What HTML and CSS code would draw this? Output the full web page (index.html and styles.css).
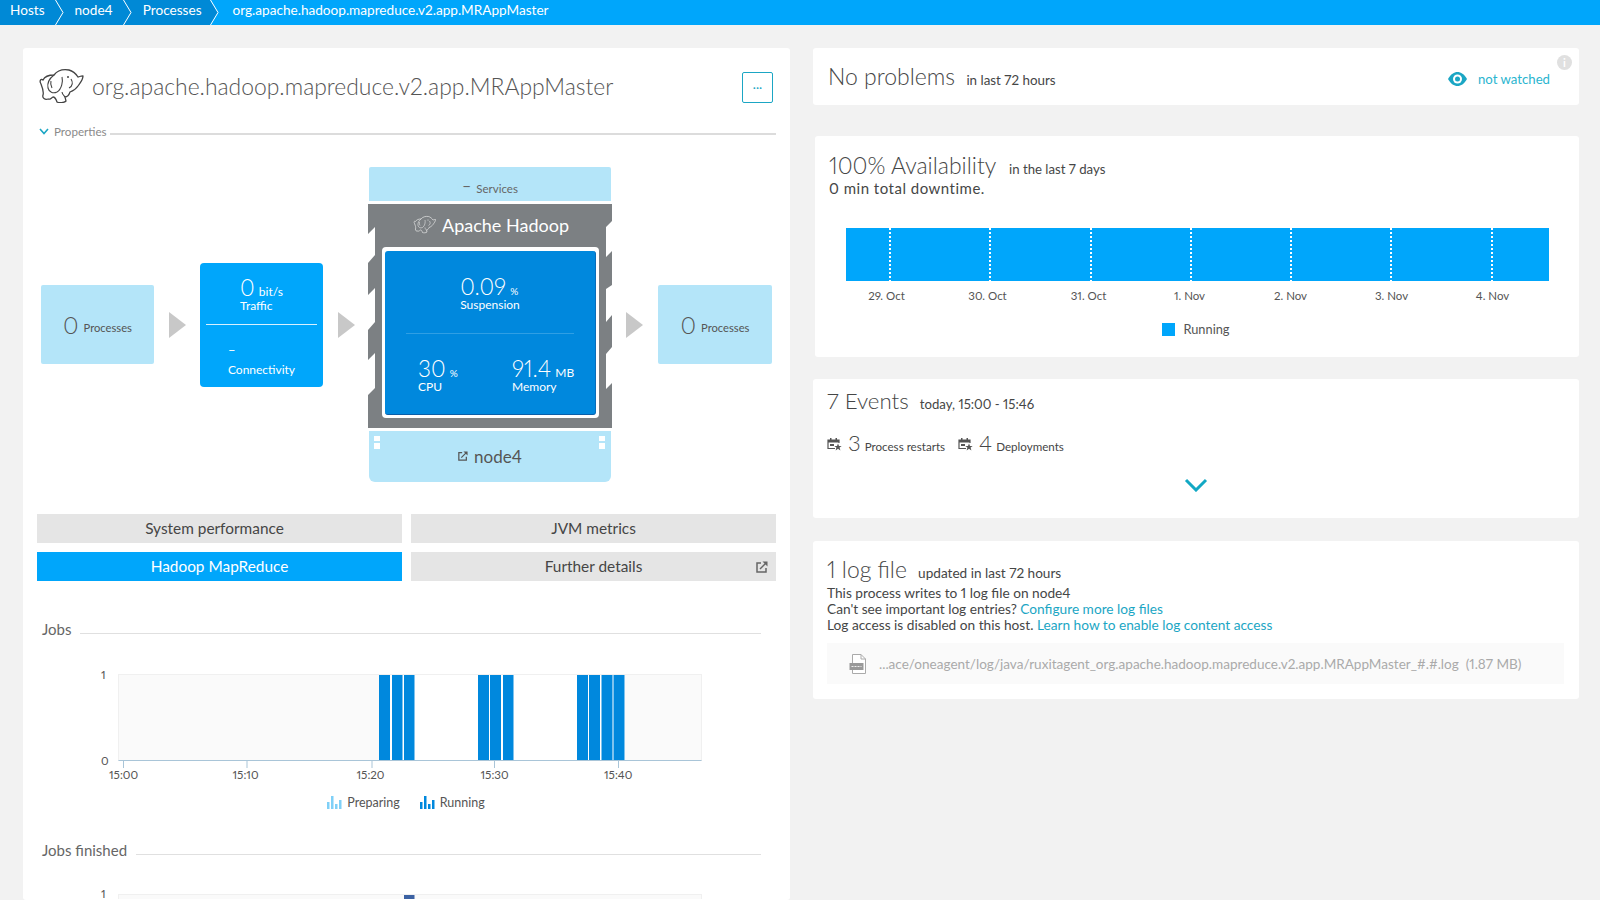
FILE: index.html
```html
<!DOCTYPE html>
<html lang="en">
<head>
    <meta charset="UTF-8">
    <meta name="viewport" content="width=device-width, initial-scale=1.0">
    <title>org.apache.hadoop.mapreduce.v2.app.MRAppMaster</title>
    <link rel="stylesheet" href="styles.css">
</head>
<body>
    <svg class="defs" width="0" height="0">
        <symbol id="elephant" viewBox="0 0 46 34">
            <path fill="none" stroke="currentColor" stroke-width="1.300" d="M3 15C1 12 3 9 5 11C7 7 12 6 16 6C19 2 25 0 31 1C35 2 38 5 40 8C42 8 44 6 45 7C45 11 42 14 40 17C38 20 35 22 32 23C31 26 29 28 27 28L28 32C26 34 21 34 19 33C18 30 17 28 15 28C13 29 12 31 10 30C7 31 4 29 5 26C6 23 5 20 3 15Z"/>
            <path fill="none" stroke="currentColor" stroke-width="1.100" d="M16 6C12 9 9 14 10 19C11 23 15 25 19 23C24 20 25 12 24 8M33 10C35 13 35 17 31 19M27 28C25 26 24 25 24 23M13 12C12 15 13 17 14 19"/>
            <circle cx="30" cy="8" r="1" fill="currentColor"/>
        </symbol>
        <symbol id="external" viewBox="0 0 12 12">
            <path fill="none" stroke="currentColor" stroke-width="1.500" d="M5 2H1V11H10V7"/>
            <path fill="none" stroke="currentColor" stroke-width="1.500" d="M4 8L10 2"/>
            <path fill="currentColor" d="M6.500 0.500H11.500V5.500Z"/>
        </symbol>
        <symbol id="calendar" viewBox="0 0 15 13">
            <path fill="none" stroke="currentColor" stroke-width="1.200" d="M8 10.500H1V2H12V5"/>
            <path fill="currentColor" d="M1 2H12V4.500H1ZM3 0H4.500V2H3ZM8.500 0H10V2H8.500ZM3 6H7V8H3Z"/>
            <path fill="currentColor" d="M11 5.500L12 8H14.700L12.600 9.600L13.400 12.500L11 10.800L8.600 12.500L9.400 9.600L7.300 8H10Z"/>
        </symbol>
        <symbol id="bars" viewBox="0 0 15 13">
            <path fill="currentColor" d="M0 6H2.500V13H0ZM4 0H6.500V13H4ZM8 8H10.500V13H8ZM12 4H14.500V13H12Z"/>
        </symbol>
    </svg>

    <nav class="topbar">
        <div class="crumbs">
            <a class="crumb">Hosts</a>
            <svg class="sep" viewBox="0 0 9 25"><path d="M0.500 0L8 12.500L0.500 25"/></svg>
            <a class="crumb">node4</a>
            <svg class="sep" viewBox="0 0 9 25"><path d="M0.500 0L8 12.500L0.500 25"/></svg>
            <a class="crumb">Processes</a>
        </div>
        <svg class="sep sep-last" viewBox="0 0 9 25"><polygon points="0,0 8,12.500 0,25"/><path d="M0.500 0L8 12.500L0.500 25"/></svg>
        <span class="crumb-current">org.apache.hadoop.mapreduce.v2.app.MRAppMaster</span>
    </nav>

    <main class="page">
        <section class="card process-card">
            <header class="process-head">
                <svg class="process-icon"><use href="#elephant"/></svg>
                <h1>org.apache.hadoop.mapreduce.v2.app.MRAppMaster</h1>
                <button class="more-btn">···</button>
            </header>

            <div class="properties">
                <svg class="props-chevron" viewBox="0 0 10 7"><path d="M1 1L5 5.500L9 1"/></svg>
                <span>Properties</span>
                <i class="rule"></i>
            </div>

            <div class="diagram">
                <div class="box-light side-box"><b>0</b> Processes</div>
                <i class="arrow"></i>
                <div class="traffic-box">
                    <div class="traffic-top">
                        <div class="stat">
                            <div class="stat-value"><b>0</b> bit/s</div>
                            <div class="stat-label">Traffic</div>
                        </div>
                    </div>
                    <div class="traffic-bottom">
                        <div class="stat">
                            <div class="dash">–</div>
                            <div class="stat-label">Connectivity</div>
                        </div>
                    </div>
                </div>
                <i class="arrow arrow-mid"></i>
                <div class="stack">
                    <div class="services"><span class="minus">–</span> Services</div>
                    <div class="core">
                        <div class="core-title">
                            <svg class="core-icon"><use href="#elephant"/></svg>
                            <span>Apache Hadoop</span>
                        </div>
                        <div class="core-frame">
                            <div class="core-blue">
                                <div class="core-top">
                                    <div class="stat">
                                        <div class="stat-value"><b>0.09</b> <small>%</small></div>
                                        <div class="stat-label">Suspension</div>
                                    </div>
                                </div>
                                <div class="core-rule"></div>
                                <div class="core-row">
                                    <div class="stat core-cpu">
                                        <div class="stat-value"><b>30</b> <small>%</small></div>
                                        <div class="stat-label">CPU</div>
                                    </div>
                                    <div class="stat">
                                        <div class="stat-value"><b>91.4</b> MB</div>
                                        <div class="stat-label">Memory</div>
                                    </div>
                                </div>
                            </div>
                        </div>
                    </div>
                    <div class="node">
                        <i class="pin pin-left"></i>
                        <i class="pin pin-right"></i>
                        <svg class="node-icon"><use href="#external"/></svg>
                        <span>node4</span>
                    </div>
                </div>
                <i class="arrow arrow-end"></i>
                <div class="box-light side-box side-box-right"><b>0</b> Processes</div>
            </div>

            <div class="tabs">
                <button class="tab tab-off-center">System performance</button>
                <button class="tab">JVM metrics</button>
                <button class="tab tab-active">Hadoop MapReduce</button>
                <button class="tab">Further details
                    <svg class="tab-icon"><use href="#external"/></svg>
                </button>
            </div>

            <div class="chart-head chart-head-first"><span>Jobs</span><i></i></div>
            <svg class="chart" viewBox="0 0 700 125" width="700" height="125">
                <rect x="77.500" y="9.500" width="583" height="86" class="plot"/>
                <rect x="338" y="10" width="246" height="85" fill="#fff"/>
                <g fill="#0088dd">
                    <rect x="338" y="10" width="11" height="86"/>
                    <rect x="351" y="10" width="10.500" height="86"/>
                    <rect x="363" y="10" width="10.500" height="86"/>
                    <rect x="437" y="10" width="11" height="86"/>
                    <rect x="449" y="10" width="11" height="86"/>
                    <rect x="462" y="10" width="10.500" height="86"/>
                    <rect x="536" y="10" width="11" height="86"/>
                    <rect x="548" y="10" width="11" height="86"/>
                    <rect x="560.500" y="10" width="11" height="86"/>
                    <rect x="572.500" y="10" width="11" height="86"/>
                </g>
                <path class="axis" d="M77.500 95.500H660.500M82.500 96V103M206 96V103M331 96V103M453.500 96V103M577.500 96V103"/>
                <g class="chart-text">
                    <text x="60" y="14">1</text>
                    <text x="60" y="100">0</text>
                    <text x="68" y="114">15:00</text>
                    <text x="191.500" y="114">15:10</text>
                    <text x="315.500" y="114">15:20</text>
                    <text x="439.500" y="114">15:30</text>
                    <text x="563" y="114">15:40</text>
                </g>
            </svg>
            <div class="chart-legend">
                <span class="legend-item"><svg class="legend-bars legend-bars-light"><use href="#bars"/></svg>Preparing</span>
                <span class="legend-item"><svg class="legend-bars"><use href="#bars"/></svg>Running</span>
            </div>

            <div class="chart-head"><span>Jobs finished</span><i></i></div>
            <svg class="chart chart-second" viewBox="0 0 700 13" width="700" height="13">
                <rect x="77.500" y="8.500" width="583" height="40" class="plot"/>
                <rect x="363" y="9" width="10.500" height="20" fill="#3c62a3"/>
                <text class="chart-text" x="60" y="12">1</text>
            </svg>
        </section>

        <div class="side">
            <section class="card problems-card">
                <h2>No problems <small>in last 72 hours</small></h2>
                <a class="watch">
                    <svg class="eye" viewBox="0 0 19 14">
                        <path fill="#1ba6c4" d="M0 7C3 2 6 0 9.500 0S16 2 19 7C16 12 13 14 9.500 14S3 12 0 7Z"/>
                        <circle cx="9.500" cy="7" r="4.500" fill="#fff"/>
                        <circle cx="9.500" cy="7" r="2.500" fill="#1ba6c4"/>
                    </svg>
                    not watched
                </a>
                <i class="info">i</i>
            </section>

            <section class="card availability-card">
                <h2>100% Availability <small>in the last 7 days</small></h2>
                <p class="downtime">0 min total downtime.</p>
                <div class="avail-bar">
                    <i></i><i></i><i></i><i></i><i></i><i></i><i></i>
                </div>
                <div class="avail-labels">
                    <span>29. Oct</span><span>30. Oct</span><span>31. Oct</span><span>1. Nov</span><span>2. Nov</span><span>3. Nov</span><span>4. Nov</span>
                </div>
                <div class="avail-legend"><i></i>Running</div>
            </section>

            <section class="card events-card">
                <h2>7 Events <small>today, 15:00 - 15:46</small></h2>
                <div class="events-row">
                    <svg class="cal-icon"><use href="#calendar"/></svg>
                    <b>3</b><span>Process restarts</span>
                    <svg class="cal-icon cal-icon-next"><use href="#calendar"/></svg>
                    <b>4</b><span>Deployments</span>
                </div>
                <svg class="events-chevron" viewBox="0 0 24 14"><path d="M2 2L12 12L22 2"/></svg>
            </section>

            <section class="card logs-card">
                <h2>1 log file <small>updated in last 72 hours</small></h2>
                <p>This process writes to 1 log file on node4</p>
                <p>Can't see important log entries? <a>Configure more log files</a></p>
                <p>Log access is disabled on this host. <a>Learn how to enable log content access</a></p>
                <div class="log-row">
                    <svg class="log-icon" viewBox="0 0 19 20">
                        <path fill="#fff" stroke="#aaa" d="M3.500 0.500H12L16.500 5V19.500H3.500Z"/>
                        <path fill="none" stroke="#aaa" d="M12 0.500V5H16.500"/>
                        <rect x="0.500" y="9" width="14" height="7" fill="#999"/>
                        <path stroke="#eee" d="M2.500 12.500H12.500" stroke-dasharray="2 1"/>
                    </svg>
                    <span>...ace/oneagent/log/java/ruxitagent_org.apache.hadoop.mapreduce.v2.app.MRAppMaster_#.#.log&nbsp; (1.87 MB)</span>
                </div>
            </section>
        </div>
    </main>
</body>
</html>
```

FILE: styles.css
```css
* {
    box-sizing: border-box;
}

html, body {
    height: 100%;
}

body {
    margin: 0;
    overflow: hidden;
    font-family: Lato, "Liberation Sans", sans-serif;
    font-size: 13px;
    color: #454646;
    background-color: #f2f2f2;
    font-variant-numeric: proportional-nums;
}

.defs {
    position: absolute;
}

i {
    display: block;
}

/* top bar */
.topbar {
    display: flex;
    align-items: center;
    height: 25px;
    background-color: #00a6fb;
    color: #fff;
    font-size: 13.600px;
}

.crumbs {
    display: flex;
    height: 25px;
    align-items: center;
    background-color: #0089d6;
    padding: 0 8px 0 10px;
}

.crumb {
    color: #fff;
    padding-bottom: 5px;
}

.sep {
    width: 9px;
    height: 25px;
    margin: 0 11px 0 10px;
    overflow: visible;
}

.sep path {
    fill: none;
    stroke: #fff;
    stroke-width: 1;
}

.sep polygon {
    fill: #0089d6;
}

.sep-last {
    margin: 0 14px 0 0;
}

.crumb-current {
    white-space: nowrap;
    padding-bottom: 5px;
}

/* page */
.page {
    display: grid;
    grid-template-columns: 767px 766px;
    column-gap: 23px;
    align-items: start;
    height: 875px;
    padding: 23px 0 0 23px;
    overflow: hidden;
}

.card {
    background-color: #fff;
    border-radius: 3px;
}

/* left card */
.process-card {
    height: 852px;
    padding: 20px 14px 0 14px;
    overflow: hidden;
}

.process-head {
    display: flex;
    align-items: center;
    height: 36px;
    margin-left: 1px;
}

.process-icon {
    width: 46px;
    height: 34px;
    color: #444;
    flex: none;
}

.process-head h1 {
    margin: 0 0 1px 8px;
    font-size: 22.900px;
    font-weight: 300;
    color: #555;
    white-space: nowrap;
    flex: 1;
}

.more-btn {
    width: 31px;
    height: 31px;
    margin: 2px 3px 0 0;
    padding: 0;
    background: #fff;
    border: 1px solid #1ba6c4;
    border-radius: 2px;
    color: #1ba6c4;
    font-size: 12px;
    font-family: inherit;
}

.properties {
    display: flex;
    align-items: center;
    margin: 19px 0 0 2px;
    height: 16px;
    font-size: 11.600px;
    color: #8a8a8a;
}

.props-chevron {
    width: 10px;
    height: 7px;
    margin-right: 5px;
    fill: none;
    stroke: #1ba6c4;
    stroke-width: 1.600;
}

.rule {
    flex: 1;
    height: 2px;
    margin: 6px 0 0 3px;
    background-color: #dcdcdc;
}

.diagram {
    display: flex;
    align-items: center;
    margin: 28px 0 0 4px;
}

.box-light {
    background-color: #b4e5f9;
    border-radius: 2px;
}

.side-box {
    width: 113px;
    height: 79px;
    line-height: 79px;
    text-align: center;
    font-size: 11.200px;
    color: #555;
}

.side-box b {
    font-size: 24px;
    font-weight: 300;
    margin-right: 2px;
    vertical-align: -2px;
}

.side-box-right {
    width: 114px;
    margin-left: 1px;
}

.arrow {
    flex: none;
    width: 0;
    height: 0;
    margin: 0 14px 0 15px;
    border-style: solid;
    border-width: 13.500px 0 13.500px 17px;
    border-color: transparent transparent transparent #c8c8c8;
}

.arrow-mid {
    margin-right: 13px;
}

.arrow-end {
    margin-left: 14px;
}

.traffic-box {
    width: 123px;
    height: 124px;
    background-color: #00a6fb;
    border-radius: 4px;
    color: #fff;
    text-align: center;
}

.traffic-top {
    height: 62px;
    margin: 0 6px;
    padding-top: 14px;
    border-bottom: 1px solid #d6f0ff;
}

.traffic-bottom {
    padding-top: 15px;
}

.stat {
    display: inline-block;
    text-align: left;
    color: #fff;
}

.stat-value {
    height: 22px;
    line-height: 20px;
    font-size: 12px;
    white-space: nowrap;
}

.stat-value b {
    font-size: 22.500px;
    font-weight: 300;
    line-height: 1;
    margin-right: 1px;
}

.stat-value small {
    font-size: 10px;
    line-height: 1;
}

.stat-label {
    font-size: 12px;
    line-height: 14px;
}

.dash {
    height: 23px;
    line-height: 21px;
}

.stack {
    display: flex;
    flex-direction: column;
    gap: 3px;
    width: 244px;
    flex: none;
}

.services {
    height: 34px;
    margin: 0 1px;
    background-color: #b4e5f9;
    text-align: center;
    line-height: 40px;
    font-size: 11.500px;
    color: #666;
    border-radius: 2px 2px 0 0;
}

.minus {
    position: relative;
    top: -2px;
    margin-right: 2px;
    font-size: 16px;
}

.core {
    height: 224px;
    padding: 0 13px 0 14px;
    background-color: #7c8083;
    clip-path: polygon(
        0 0, 100% 0, 100% 17px, 238px 23px, 238px 53px, 100% 47px,
        100% 81px, 238px 85px, 238px 118px, 100% 111px,
        100% 143px, 238px 150px, 238px 185px, 100% 179px,
        100% 100%, 0 100%,
        0 191px, 7px 184px, 7px 149px, 0 156px,
        0 126px, 7px 118px, 7px 84px, 0 91px,
        0 59px, 7px 51px, 7px 23px, 0 30px
    );
}

.core-title {
    display: flex;
    align-items: center;
    justify-content: center;
    height: 41px;
    margin-bottom: 2px;
    padding-left: 1px;
    gap: 6px;
    color: #fff;
    font-size: 18px;
}

.core-icon {
    width: 23px;
    height: 19px;
    color: #eee;
}

.core-frame {
    height: 171px;
    width: 217px;
    padding: 4px 3px 3px;
    background-color: #fff;
    border-radius: 4px;
}

.core-blue {
    height: 164px;
    background-color: #0088dd;
    border-radius: 3px;
    border-bottom: 1px solid #0a5ea8;
    border-right: 1px solid #0a6cb8;
    padding-top: 25px;
}

.core-top {
    text-align: center;
}

.core-rule {
    height: 1px;
    margin: 21px 21px 0;
    background-color: #2f9fe4;
}

.core-row {
    display: flex;
    margin-top: 24px;
    padding-left: 33px;
}

.core-cpu {
    width: 94px;
}

.node {
    position: relative;
    display: flex;
    align-items: center;
    justify-content: center;
    gap: 6px;
    height: 51px;
    margin: 0 1px;
    padding-bottom: 1px;
    background-color: #b4e5f9;
    border-radius: 0 0 6px 6px;
    font-size: 17px;
    color: #555;
}

.node-icon {
    width: 10px;
    height: 10px;
}

.pin {
    position: absolute;
    top: 5px;
    width: 6px;
    height: 13px;
    background: linear-gradient(#fff 5px, transparent 5px, transparent 7px, #fff 7px);
}

.pin-left {
    left: 5px;
}

.pin-right {
    right: 6px;
}

/* tabs */
.tabs {
    display: grid;
    grid-template-columns: 365px 365px;
    gap: 9px;
    margin-top: 32px;
}

.tab {
    position: relative;
    height: 29px;
    padding: 0 0 2px;
    border: none;
    background-color: #e5e5e5;
    color: #454646;
    font-family: inherit;
    font-size: 15.400px;
}

.tab-off-center {
    padding-right: 10px;
}

.tab-active {
    background-color: #00a6fb;
    color: #fff;
}

.tab-icon {
    position: absolute;
    top: 9px;
    right: 8px;
    width: 12px;
    height: 12px;
    color: #666;
}

/* charts */
.chart-head {
    display: flex;
    align-items: flex-end;
    margin: 31px 15px 0 5px;
    height: 18px;
    color: #666;
    font-size: 15px;
    gap: 9px;
}

.chart-head-first {
    margin-top: 39px;
}

.chart-head i {
    flex: 1;
    height: 1px;
    margin-bottom: 4px;
    background-color: #e0e0e0;
}

.chart {
    display: block;
    margin: 27px 0 0 4px;
}

.chart-second {
    margin-top: 27px;
}

.plot {
    fill: #fafafa;
    stroke: #f0f0f0;
}

.axis {
    fill: none;
    stroke: #a9c5d8;
}

.chart-text {
    font-size: 11.600px;
    fill: #555;
}

.chart-legend {
    display: flex;
    justify-content: center;
    gap: 20px;
    margin: 5px 0 0 -1px;
    font-size: 12.500px;
    color: #555;
}

.legend-item {
    display: flex;
    align-items: center;
    gap: 5px;
}

.legend-bars {
    width: 15px;
    height: 13px;
    color: #0088dd;
}

.legend-bars-light {
    color: #7fd0f7;
}

/* right column */
.side {
    display: flex;
    flex-direction: column;
}

.side h2 {
    margin: 0;
    font-size: 23px;
    font-weight: 300;
    color: #454646;
    white-space: nowrap;
}

.side h2 small {
    margin-left: 5px;
    font-size: 13.400px;
    font-weight: 400;
}

.problems-card {
    position: relative;
    display: flex;
    align-items: center;
    justify-content: space-between;
    height: 57px;
    padding: 0 29px 2px 15px;
}

.watch {
    display: flex;
    align-items: center;
    gap: 11px;
    font-size: 13.200px;
    color: #2ab5cf;
    margin-top: 6px;
}

.eye {
    width: 19px;
    height: 14px;
}

.info {
    position: absolute;
    top: 7px;
    right: 7px;
    width: 15px;
    height: 15px;
    border-radius: 50%;
    background-color: #e0e0e0;
    color: #fff;
    font-size: 11px;
    font-style: normal;
    font-weight: 700;
    line-height: 15px;
    text-align: center;
}

.availability-card {
    height: 221px;
    margin: 31px 0 0 2px;
    padding: 15px 0 0 14px;
}

.availability-card h2 small {
    margin-left: 7px;
    font-size: 13.200px;
}

.downtime {
    margin: 0;
    font-size: 15px;
    letter-spacing: 0.500px;
    line-height: 18px;
}

.avail-bar {
    display: flex;
    width: 703px;
    height: 53px;
    margin: 31px 0 0 17px;
    padding-left: 43px;
    background-color: #00a6fb;
}

.avail-bar i {
    flex: none;
    width: 2px;
    height: 100%;
    margin-right: 98.300px;
    background-image: linear-gradient(#fff 50%, transparent 50%);
    background-size: 2px 4px;
}

.avail-labels {
    display: flex;
    margin: 8px 0 0 17px;
    font-size: 11.500px;
    color: #555;
    padding-left: 1px;
}

.avail-labels span {
    flex: none;
    width: 101px;
    text-align: center;
    line-height: 14px;
}

.avail-labels span:first-child {
    margin-left: -11px;
}

.avail-legend {
    display: flex;
    align-items: center;
    justify-content: center;
    gap: 8px;
    margin: 18px 0 0 0;
    padding-right: 16px;
    font-size: 12.800px;
    color: #555;
}

.avail-legend i {
    width: 13px;
    height: 13px;
    background-color: #00a6fb;
}

.events-card {
    position: relative;
    height: 139px;
    margin-top: 22px;
    padding: 8px 14px 0;
}

.events-card h2 {
    font-size: 22.300px;
}

.logs-card h2 {
    margin-bottom: 1.500px;
    font-size: 22.900px;
}

.events-card h2 small {
    font-size: 13.200px;
}

.logs-card h2 small {
    font-size: 13.600px;
}

.events-row {
    display: flex;
    align-items: baseline;
    margin-top: 15px;
    font-size: 11.600px;
    color: #454646;
}

.events-row b {
    font-size: 22px;
    font-weight: 300;
    margin: 0 4px 0 6px;
}

.cal-icon {
    width: 15px;
    height: 13px;
    color: #555;
}

.cal-icon-next {
    margin-left: 13px;
}

.events-chevron {
    display: block;
    width: 24px;
    height: 14px;
    margin: 22px auto 0;
    fill: none;
    stroke: #12a8c4;
    stroke-width: 3;
}

.logs-card {
    height: 158px;
    margin-top: 23px;
    padding: 14px 15px 0 14px;
}

.logs-card p {
    margin: 0;
    font-size: 13.700px;
    line-height: 16.300px;
}

.logs-card a {
    color: #1ba6c4;
}

.log-row {
    display: flex;
    align-items: center;
    gap: 11px;
    height: 41px;
    margin-top: 10px;
    padding-left: 22px;
    background-color: #fafafa;
    font-size: 13.550px;
    color: #aaa;
    white-space: nowrap;
}

.log-icon {
    width: 19px;
    height: 20px;
    flex: none;
}
```
